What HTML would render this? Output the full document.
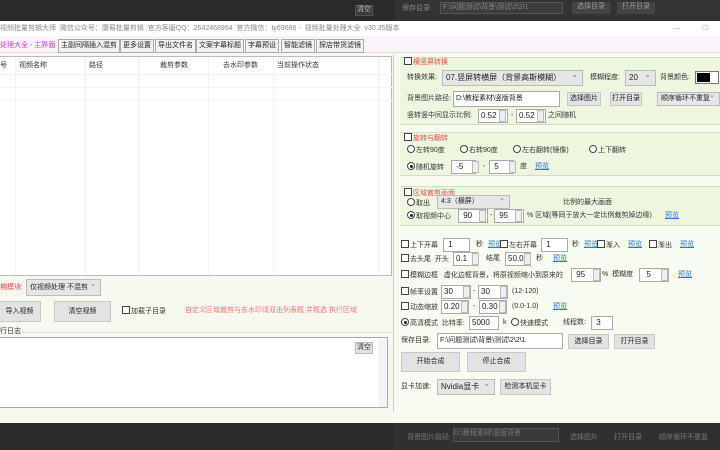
<!DOCTYPE html>
<html><head><meta charset="utf-8"><style>
*{box-sizing:border-box;margin:0;padding:0}
body{width:720px;height:450px;overflow:hidden;background:#2a2a2a;font-family:"Liberation Sans","Noto Sans CJK SC",sans-serif;font-size:7px;line-height:10px;color:#333;position:relative}
.a{position:absolute;white-space:nowrap;line-height:10px}
.tab{position:absolute;top:39px;height:14px;border:1px solid #aaa;background:#f2f2f2;font-size:7px;line-height:12px;padding:0 2px;color:#222;white-space:nowrap}
.btn{position:absolute;background:#e3e3e3;border:1px solid #c8c8c8;text-align:center;color:#222;white-space:nowrap}
.inp{position:absolute;background:#fff;border:1px solid #aaa;padding-left:2px;color:#222;height:14px;line-height:12px;white-space:nowrap;overflow:hidden;font-size:8px}
.sel{position:absolute;background:#e6e6e6;border:1px solid #bbb;padding-left:3px;color:#222;white-space:nowrap;font-size:8px}
.sel:after{content:"⌄";position:absolute;right:4px;top:-3px;color:#777}
.cb{display:inline-block;width:8px;height:8px;border:1px solid #444;background:#fff;vertical-align:-1px;margin-right:1px}
.rd{display:inline-block;width:8px;height:8px;border:1px solid #444;border-radius:50%;background:#fff;vertical-align:-1px;margin-right:1px;position:relative}
.rd.on:after{content:"";position:absolute;left:1.5px;top:1.5px;width:3px;height:3px;border-radius:50%;background:#222}
.sec{position:absolute;left:400px;width:320px;background:#eef6e0;border-top:1px solid #cfe0c0;border-bottom:1px solid #cfe0c0}
.red{color:#e05050}
.lk{color:#2a7ad0;text-decoration:underline}
.sp{position:absolute;width:7px;height:12px;background:#eee;border:1px solid #bbb}
</style></head><body>
<div class="a" style="left:355px;top:5px;width:18px;height:11px;background:#3a3a3a;border:1px solid #555"></div>
<div class="a" style="left:357px;top:5px;color:#bbb;font-size:7px">清空</div>
<div class="a" style="left:395px;top:0;width:325px;height:21px;background:#333"></div>
<div class="a" style="left:402px;top:4px;color:#888">保存目录:</div>
<div class="a" style="left:440px;top:2px;width:123px;height:12px;background:#3c3c3c;border:1px solid #555;color:#888;font-size:7px;padding-left:2px">F:\问题测试\背景\测试\2\2\1</div>
<div class="a" style="left:572px;top:2px;width:38px;height:12px;background:#444;color:#999;font-size:7px;text-align:center">选择目录</div>
<div class="a" style="left:617px;top:2px;width:38px;height:12px;background:#444;color:#999;font-size:7px;text-align:center">打开目录</div>

<div class="a" style="left:0;top:21px;width:720px;height:402px;background:#f7f8ef"></div>
<div class="a" style="left:0;top:21px;width:720px;height:15px;background:#fff"></div>
<div class="a" style="left:0;top:24px;color:#888">视频批量剪辑大师 &nbsp;微信公众号：康易批量剪辑 &nbsp;官方客服QQ：2642468954 &nbsp;官方微信：ty69686 - &nbsp;视频批量处理大全 &nbsp;v30.35版本</div>
<div class="a" style="left:673px;top:24px;color:#aaa">—</div>
<div class="a" style="left:702px;top:24px;color:#aaa">☐</div>
<div class="a" style="left:0;top:36px;width:720px;height:17px;background:#fbf4fb;border-bottom:1px solid #ddd"></div>
<div class="a" style="left:0;top:41px;color:#d040d0">处理大全 - 主界面</div>
<div class="tab" style="left:58px">主副间隔插入混剪</div>
<div class="tab" style="left:120px">更多设置</div>
<div class="tab" style="left:155px">导出文件名</div>
<div class="tab" style="left:196px">文案字幕标题</div>
<div class="tab" style="left:245px">字幕预设</div>
<div class="tab" style="left:281px">智能滤镜</div>
<div class="tab" style="left:316px">探店带货滤镜</div>

<div class="a" style="left:-1px;top:56px;width:393px;height:220px;background:#fff;border:1px solid #bbb"></div>
<div class="a" style="left:0;top:61px">号</div>
<div class="a" style="left:19px;top:61px">视频名称</div>
<div class="a" style="left:89px;top:61px">路径</div>
<div class="a" style="left:160px;top:61px">裁剪参数</div>
<div class="a" style="left:223px;top:61px">去水印参数</div>
<div class="a" style="left:277px;top:61px">当前操作状态</div>
<div class="a" style="left:15px;top:57px;width:1px;height:218px;background:#f0f0f0"></div>
<div class="a" style="left:85px;top:57px;width:1px;height:218px;background:#f0f0f0"></div>
<div class="a" style="left:138px;top:57px;width:1px;height:218px;background:#f0f0f0"></div>
<div class="a" style="left:208px;top:57px;width:1px;height:218px;background:#f0f0f0"></div>
<div class="a" style="left:273px;top:57px;width:1px;height:218px;background:#f0f0f0"></div>
<div class="a" style="left:378px;top:57px;width:1px;height:218px;background:#f0f0f0"></div>
<div class="a" style="left:0;top:74px;width:392px;height:1px;background:#f0f0f0"></div>
<div class="a" style="left:0;top:87px;width:392px;height:1px;background:#f4f4f4"></div>
<div class="a" style="left:0;top:100px;width:392px;height:1px;background:#f4f4f4"></div>

<div class="a red" style="left:0;top:283px">期模块:</div>
<div class="sel" style="left:26px;top:279px;width:75px;height:17px;line-height:15px;font-size:7px">仅视频处理 不混剪</div>
<div class="btn" style="left:-2px;top:301px;width:43px;height:21px;line-height:19px">导入视频</div>
<div class="btn" style="left:54px;top:301px;width:57px;height:21px;line-height:19px">清空视频</div>
<div class="a" style="left:122px;top:306px"><span class="cb"></span>加载子目录</div>
<div class="a" style="left:185px;top:306px;color:#ea7a7a">自定义区域裁剪与去水印请双击列表框 并框选 执行区域</div>
<div class="a" style="left:0;top:327px">行日志</div>
<div class="a" style="left:22px;top:332px;width:370px;height:1px;background:#ddd"></div>
<div class="a" style="left:-1px;top:337px;width:389px;height:71px;background:#fff;border:1px solid #aaa"></div>
<div class="a" style="left:355px;top:342px;width:18px;height:12px;background:#e3e3e3;border:1px solid #bbb;font-size:7px;text-align:center;line-height:10px">清空</div>
<div class="a" style="left:378px;top:338px;width:9px;height:69px;background:#f4f4f4"></div>

<div class="a" style="left:393px;top:54px;width:1px;height:358px;background:#ccc"></div>
<div class="a" style="left:394px;top:54px;width:326px;height:369px;background:#f8fbf0"></div>

<div class="sec" style="top:57px;height:68px"></div>
<div class="a" style="left:404px;top:57px"><span class="cb"></span><span class="red">横竖屏转换</span></div>
<div class="a" style="left:407px;top:73px">转换效果:</div>
<div class="sel" style="left:442px;top:70px;width:141px;height:16px;line-height:14px">07.竖屏转横屏（背景高斯模糊）</div>
<div class="a" style="left:590px;top:73px">模糊程度:</div>
<div class="sel" style="left:625px;top:70px;width:31px;height:16px;line-height:14px">20</div>
<div class="a" style="left:660px;top:73px">背景颜色:</div>
<div class="a" style="left:695px;top:71px;width:24px;height:13px;border:1px solid #777;background:#fff"><div style="position:absolute;left:1px;top:1px;width:13px;height:9px;background:#000"></div></div>
<div class="a" style="left:407px;top:94px">背景图片路径:</div>
<div class="inp" style="left:453px;top:91px;width:107px;height:16px;line-height:14px;font-size:7px">D:\教程素材\竖版背景</div>
<div class="btn" style="left:567px;top:92px;width:34px;height:14px;line-height:12px">选择图片</div>
<div class="btn" style="left:610px;top:92px;width:32px;height:14px;line-height:12px">打开目录</div>
<div class="sel" style="left:657px;top:92px;width:63px;height:14px;line-height:12px;font-size:7px">顺序循环不重复</div>
<div class="a" style="left:407px;top:111px">竖转竖中间显示比例:</div>
<div class="inp" style="left:478px;top:109px;width:30px">0.52</div>
<div class="sp" style="left:499px;top:110px"></div>
<div class="a" style="left:511px;top:111px">-</div>
<div class="inp" style="left:516px;top:109px;width:30px">0.52</div>
<div class="sp" style="left:537px;top:110px"></div>
<div class="a" style="left:548px;top:111px">之间随机</div>

<div class="sec" style="top:132px;height:44px"></div>
<div class="a" style="left:404px;top:133px"><span class="cb"></span><span class="red">旋转与翻转</span></div>
<div class="a" style="left:407px;top:145px"><span class="rd"></span>左转90度</div>
<div class="a" style="left:460px;top:145px"><span class="rd"></span>右转90度</div>
<div class="a" style="left:513px;top:145px"><span class="rd"></span>左右翻转(镜像)</div>
<div class="a" style="left:589px;top:145px"><span class="rd"></span>上下翻转</div>
<div class="a" style="left:407px;top:162px"><span class="rd on"></span>随机旋转</div>
<div class="inp" style="left:451px;top:160px;width:25px">&nbsp;-5</div>
<div class="sp" style="left:472px;top:161px"></div>
<div class="a" style="left:483px;top:162px">-</div>
<div class="inp" style="left:489px;top:160px;width:25px">&nbsp;5</div>
<div class="sp" style="left:509px;top:161px"></div>
<div class="a" style="left:520px;top:162px">度</div>
<div class="a lk" style="left:535px;top:162px">预览</div>

<div class="sec" style="top:186px;height:40px"></div>
<div class="a" style="left:404px;top:188px"><span class="cb"></span><span class="red">区域裁剪画面</span></div>
<div class="a" style="left:407px;top:198px"><span class="rd"></span>取出</div>
<div class="sel" style="left:437px;top:195px;width:73px;height:14px;line-height:12px;font-size:7px">4:3（横屏）</div>
<div class="a" style="left:563px;top:198px">比例的最大画面</div>
<div class="a" style="left:407px;top:211px"><span class="rd on"></span>取视频中心</div>
<div class="inp" style="left:458px;top:209px;width:30px">&nbsp;90</div>
<div class="sp" style="left:479px;top:210px"></div>
<div class="a" style="left:490px;top:211px">-</div>
<div class="inp" style="left:494px;top:209px;width:30px">&nbsp;95</div>
<div class="sp" style="left:515px;top:210px"></div>
<div class="a" style="left:527px;top:211px">% 区域(等同于放大一定比例裁剪掉边缘)</div>
<div class="a lk" style="left:665px;top:211px">预览</div>

<div class="a" style="left:401px;top:240px"><span class="cb"></span>上下开幕</div>
<div class="inp" style="left:443px;top:238px;width:27px">&nbsp;1</div>
<div class="a" style="left:476px;top:240px">秒</div><div class="a lk" style="left:488px;top:240px">预览</div>
<div class="a" style="left:500px;top:240px"><span class="cb"></span>左右开幕</div>
<div class="inp" style="left:541px;top:238px;width:27px">&nbsp;1</div>
<div class="a" style="left:572px;top:240px">秒</div><div class="a lk" style="left:584px;top:240px">预览</div>
<div class="a" style="left:597px;top:240px"><span class="cb"></span>渐入</div><div class="a lk" style="left:628px;top:240px">预览</div>
<div class="a" style="left:649px;top:240px"><span class="cb"></span>渐出</div><div class="a lk" style="left:680px;top:240px">预览</div>

<div class="a" style="left:401px;top:254px"><span class="cb"></span>去头尾 &nbsp;开头</div>
<div class="inp" style="left:453px;top:252px;width:25px">0.1</div>
<div class="sp" style="left:472px;top:253px"></div>
<div class="a" style="left:486px;top:254px">结尾</div>
<div class="inp" style="left:505px;top:252px;width:26px">50.0</div>
<div class="sp" style="left:524px;top:253px"></div>
<div class="a" style="left:536px;top:254px">秒</div><div class="a lk" style="left:553px;top:254px">预览</div>

<div class="a" style="left:401px;top:270px"><span class="cb"></span>模糊边框 &nbsp;&nbsp;虚化边框背景，将原视频缩小到原来的</div>
<div class="inp" style="left:571px;top:268px;width:30px">&nbsp;95</div>
<div class="sp" style="left:593px;top:269px"></div>
<div class="a" style="left:602px;top:270px">% &nbsp;模糊度</div>
<div class="inp" style="left:639px;top:268px;width:30px">&nbsp;&nbsp;5</div>
<div class="sp" style="left:661px;top:269px"></div>
<div class="a lk" style="left:678px;top:270px">预览</div>

<div class="a" style="left:401px;top:287px"><span class="cb"></span>帧率设置</div>
<div class="inp" style="left:441px;top:285px;width:30px">30</div>
<div class="sp" style="left:463px;top:286px"></div>
<div class="a" style="left:473px;top:287px">-</div>
<div class="inp" style="left:478px;top:285px;width:30px">30</div>
<div class="sp" style="left:500px;top:286px"></div>
<div class="a" style="left:512px;top:287px">(12-120)</div>

<div class="a" style="left:401px;top:302px"><span class="cb"></span>动态缩放</div>
<div class="inp" style="left:441px;top:300px;width:28px">0.20</div>
<div class="sp" style="left:461px;top:301px"></div>
<div class="a" style="left:473px;top:302px">-</div>
<div class="inp" style="left:479px;top:300px;width:28px">0.30</div>
<div class="sp" style="left:499px;top:301px"></div>
<div class="a" style="left:512px;top:302px">(0.0-1.0)</div><div class="a lk" style="left:553px;top:302px">预览</div>

<div class="a" style="left:401px;top:318px"><span class="rd on"></span>高清模式 &nbsp;比特率:</div>
<div class="inp" style="left:469px;top:316px;width:30px">5000</div>
<div class="a" style="left:503px;top:318px">k</div>
<div class="a" style="left:511px;top:318px"><span class="rd"></span>快速模式</div>
<div class="a" style="left:563px;top:318px">线程数:</div>
<div class="inp" style="left:591px;top:316px;width:22px">&nbsp;3</div>

<div class="a" style="left:401px;top:336px">保存目录:</div>
<div class="inp" style="left:437px;top:333px;width:126px;height:16px;line-height:14px;font-size:7px">F:\问题测试\背景\测试\2\2\1</div>
<div class="btn" style="left:568px;top:334px;width:41px;height:15px;line-height:13px">选择目录</div>
<div class="btn" style="left:614px;top:334px;width:41px;height:15px;line-height:13px">打开目录</div>
<div class="btn" style="left:401px;top:352px;width:59px;height:20px;line-height:18px">开始合成</div>
<div class="btn" style="left:467px;top:352px;width:59px;height:20px;line-height:18px">停止合成</div>
<div class="a" style="left:401px;top:382px">显卡加速:</div>
<div class="sel" style="left:437px;top:379px;width:58px;height:16px;line-height:14px">Nvidia显卡</div>
<div class="btn" style="left:500px;top:379px;width:51px;height:16px;line-height:14px">检测本机显卡</div>

<div class="a" style="left:393px;top:423px;width:327px;height:27px;background:#303030"></div>
<div class="a" style="left:407px;top:433px;color:#777">背景图片路径:</div>
<div class="a" style="left:453px;top:428px;width:106px;height:14px;background:#3a3a3a;border:1px solid #555;color:#777;font-size:7px">D:\教程素材\竖版背景</div>
<div class="a" style="left:570px;top:433px;color:#777">选择图片</div>
<div class="a" style="left:614px;top:433px;color:#777">打开目录</div>
<div class="a" style="left:659px;top:433px;color:#777">顺序循环不重复</div>
</body></html>
